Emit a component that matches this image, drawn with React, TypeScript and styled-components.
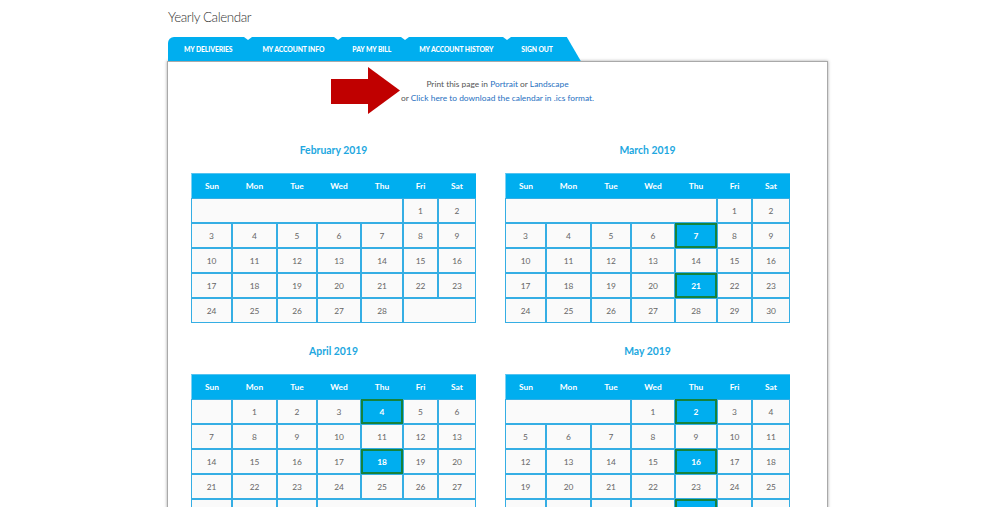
import styled, { createGlobalStyle } from "styled-components";

const GlobalStyle = createGlobalStyle`
  body {
    margin: 0;
    background: #fff;
    font-family: Lato, "Open Sans", "Liberation Sans", sans-serif;
  }
`;

const Page = styled.div`
  width: 661px;
  margin-left: 167px;
`;

const PageTitle = styled.h1`
  margin: 0;
  padding: 8px 0 0 1px;
  height: 28px;
  font-size: 13.4px;
  font-weight: 300;
  letter-spacing: -0.4px;
  line-height: 18px;
  color: #333;
`;

const TabBar = styled.nav`
  display: inline-flex;
  height: 24px;
  margin-left: 1px;
  padding-right: 14px;
  background: #00aeef;
  border-top-left-radius: 6px;
  clip-path: polygon(0 0, calc(100% - 14px) 0, 100% 100%, 0 100%);
`;

const Tab = styled.a<{ $notch?: boolean }>`
  position: relative;
  display: flex;
  align-items: center;
  padding: 0 ${(p) => (p.$notch ? 14 : 16)}px;
  font-size: 6.8px;
  font-weight: 900;
  letter-spacing: -0.1px;
  color: #fff;
  text-transform: uppercase;
  white-space: nowrap;
  cursor: pointer;

  &::before {
    content: "";
    display: ${(p) => (p.$notch ? "block" : "none")};
    position: absolute;
    top: 0;
    left: -4px;
    border-left: 4px solid transparent;
    border-right: 4px solid transparent;
    border-top: 3px solid #fff;
  }
`;

const Panel = styled.section`
  border: 1px solid #a9a9a9;
  box-shadow: 0 0 3px rgba(0, 0, 0, 0.35);
  background: #fff;
  min-height: 480px;
`;

const Intro = styled.div`
  display: grid;
  grid-template-columns: 1fr auto 1fr;
  align-items: center;
  padding-top: 5px;
`;

const Arrow = styled.svg`
  justify-self: end;
  display: block;
`;

const IntroText = styled.p`
  margin: 0;
  text-align: center;
  font-size: 8.4px;
  line-height: 14px;
  color: #555;
`;

const Link = styled.a`
  color: #1f70c1;
  text-decoration: none;
  cursor: pointer;
`;

const Months = styled.div`
  display: grid;
  grid-template-columns: repeat(2, 285px);
  column-gap: 29px;
  row-gap: 20px;
  padding: 27px 0 0 23px;
`;

const MonthTitle = styled.h2`
  margin: 0 0 15px;
  text-align: center;
  font-size: 10.4px;
  font-weight: 700;
  line-height: 16px;
  color: #22a7e0;
`;

const Grid = styled.div`
  display: grid;
  grid-template-columns: 41px 45px 40px 44px 42px 35px 38px;
  grid-auto-rows: 25px;
`;

const HeadCell = styled.div`
  display: flex;
  align-items: center;
  justify-content: center;
  background: #00aeef;
  border-top: 1px solid #55c3f0;
  font-size: 8.4px;
  font-weight: 700;
  color: #fff;

  &:first-child {
    border-left: 1px solid #7fd1f3;
  }
  &:last-child {
    border-right: 1px solid #7fd1f3;
  }
`;

const DayCell = styled.div<{ $span?: number; $delivery?: boolean }>`
  grid-column: span ${(p) => p.$span ?? 1};
  box-sizing: border-box;
  display: flex;
  align-items: center;
  justify-content: center;
  border: 1px solid ${(p) => (p.$delivery ? "#16823c" : "#35aee4")};
  box-shadow: ${(p) => (p.$delivery ? "inset 0 0 0 1px #16823c" : "none")};
  background: ${(p) => (p.$delivery ? "#00aeef" : "#fafafa")};
  font-size: 8.4px;
  font-weight: ${(p) => (p.$delivery ? 700 : 400)};
  color: ${(p) => (p.$delivery ? "#fff" : "#666")};
`;

type Month = {
  name: string;
  offset: number;
  days: number;
  deliveries: number[];
};

const MONTHS: Month[] = [
  { name: "February 2019", offset: 5, days: 28, deliveries: [] },
  { name: "March 2019", offset: 5, days: 30, deliveries: [7, 21] },
  { name: "April 2019", offset: 1, days: 30, deliveries: [4, 18] },
  { name: "May 2019", offset: 3, days: 31, deliveries: [2, 16, 30] },
];

const WEEKDAYS = ["Sun", "Mon", "Tue", "Wed", "Thu", "Fri", "Sat"];
const TABS = ["My Deliveries", "My Account Info", "Pay My Bill", "My Account History", "Sign Out"];

function MonthCalendar({ month }: { month: Month }) {
  const cells: JSX.Element[] = [];
  if (month.offset > 0) cells.push(<DayCell key="lead" $span={month.offset} />);
  for (let d = 1; d <= month.days; d++) {
    cells.push(
      <DayCell key={d} $delivery={month.deliveries.includes(d)}>
        {d}
      </DayCell>
    );
  }
  const trailing = (7 - ((month.offset + month.days) % 7)) % 7;
  if (trailing > 0) cells.push(<DayCell key="trail" $span={trailing} />);

  return (
    <div>
      <MonthTitle>{month.name}</MonthTitle>
      <Grid>
        {WEEKDAYS.map((w) => (
          <HeadCell key={w}>{w}</HeadCell>
        ))}
        {cells}
      </Grid>
    </div>
  );
}

export default function App() {
  return (
    <Page>
      <GlobalStyle />
      <PageTitle>Yearly Calendar</PageTitle>
      <TabBar>
        {TABS.map((t, i) => (
          <Tab key={t} $notch={i > 0}>
            {t}
          </Tab>
        ))}
      </TabBar>
      <Panel>
        <Intro>
          <Arrow width="70" height="48" viewBox="0 0 70 48">
            <rect x="0" y="12" width="39" height="25" fill="#c00000" />
            <polygon points="37,0 69,23.5 37,47" fill="#c00000" />
          </Arrow>
          <IntroText>
            Print this page in <Link>Portrait</Link> or <Link>Landscape</Link>
            <br />
            or <Link>Click here to download the calendar in .ics format.</Link>
          </IntroText>
          <div />
        </Intro>
        <Months>
          {MONTHS.map((m) => (
            <MonthCalendar key={m.name} month={m} />
          ))}
        </Months>
      </Panel>
    </Page>
  );
}
